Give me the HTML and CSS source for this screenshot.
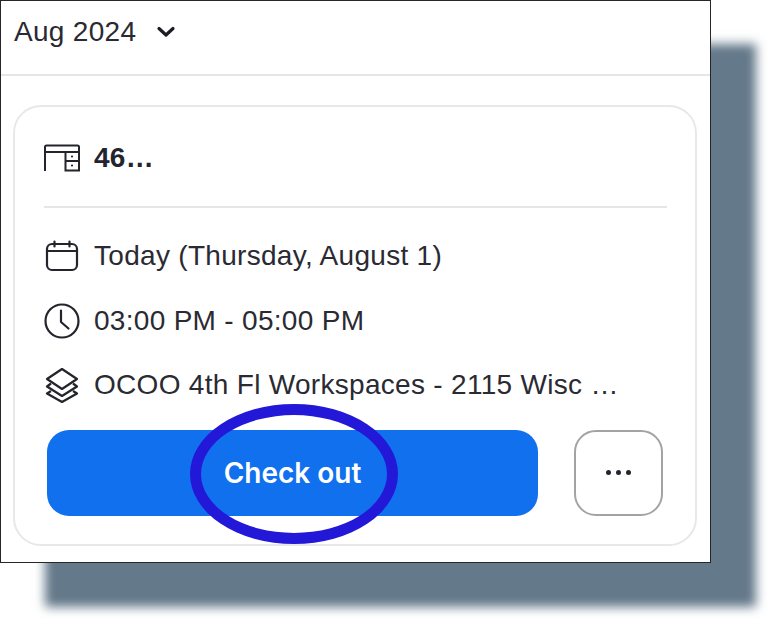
FILE: index.html
```html
<!DOCTYPE html>
<html lang="en">
  <head>
    <meta charset="UTF-8" />
    <meta name="viewport" content="width=device-width, initial-scale=1.0" />
    <title>Bookings</title>
    <link rel="stylesheet" href="styles.css">
  </head>
  <body>
    <div class="panel">
      <div class="month-bar">
        <span>Aug 2024</span>
        <svg class="chevron" width="20" height="14" viewBox="0 0 20 14" fill="none" stroke="#1c1c22" stroke-width="3.2" stroke-linecap="round" stroke-linejoin="round">
          <path d="M3 3.5 L10 10 L17 3.5" />
        </svg>
      </div>

      <div class="card">
        <div class="desk-row">
          <svg class="icon" width="36" height="28" viewBox="0 0 36 28" fill="none" stroke="#24242c" stroke-width="2">
            <path d="M1 27 V3 Q1 1.500 2.500 1.500 H33.500 Q35 1.500 35 3 V26.500 H21.500 V8 M1 8 H35 M21.500 17 H35" />
            <circle cx="28" cy="12.500" r="1.100" fill="#24242c" stroke="none" />
            <circle cx="28" cy="21.500" r="1.100" fill="#24242c" stroke="none" />
          </svg>
          <strong>46…</strong>
        </div>

        <div class="info-list">
          <div class="info-row">
            <svg class="icon" width="36" height="32" viewBox="0 0 36 32" fill="none" stroke="#24242c" stroke-width="2.200" stroke-linecap="round">
              <rect x="3" y="4" width="30" height="26" rx="5" />
              <path d="M3 11 H33 M10.500 1.500 V6.500 M25.500 1.500 V6.500" />
            </svg>
            <span>Today (Thursday, August 1)</span>
          </div>
          <div class="info-row">
            <svg class="icon" width="36" height="36" viewBox="0 0 36 36" fill="none" stroke="#24242c" stroke-width="2.200" stroke-linecap="round" stroke-linejoin="round">
              <circle cx="18" cy="18" r="16.500" />
              <path d="M17 7.500 V19 L24.500 25.500" />
            </svg>
            <span>03:00 PM - 05:00 PM</span>
          </div>
          <div class="info-row">
            <svg class="icon" width="36" height="36" viewBox="0 0 36 36" fill="none" stroke="#24242c" stroke-width="2.200" stroke-linejoin="round">
              <path d="M18 2 L33 12 L18 22 L3 12 Z" />
              <path d="M7 16.500 L3 19.500 L18 29 L33 19.500 L29 16.500" />
              <path d="M7 24 L3 26.500 L18 35 L33 26.500 L29 24" />
            </svg>
            <span>OCOO 4th Fl Workspaces - 2115 Wisc …</span>
          </div>
        </div>

        <div class="actions">
          <button class="btn-checkout">Check out</button>
          <button class="btn-more">
            <i></i><i></i><i></i>
          </button>
        </div>
      </div>

      <!-- hand drawn circle over the button -->
      <div class="mark"></div>
    </div>
  </body>
</html>
```

FILE: styles.css
```css
* {
  box-sizing: border-box;
}

html,
body {
  min-height: 620px;
}

body {
  margin: 0;
  padding-bottom: 57px;
  background-color: white;
  font-family: "Liberation Sans", Arial, sans-serif;
  color: #2a2a33;
  letter-spacing: 0.3px;
}

.panel {
  position: relative;
  width: 711px;
  height: 563px;
  background-color: white;
  border: 1px solid #26262a;
  box-shadow: 45px 44px 10px #64798a;
}

.month-bar {
  display: flex;
  align-items: center;
  gap: 20px;
  height: 75px;
  padding: 0 0 12px 13px;
  border-bottom: 2px solid #e6e6e6;
  font-size: 28px;
}

.card {
  margin: 29px 13px 0 12px;
  height: 441px;
  padding: 34px 28px 0 29px;
  border: 2px solid #e8e8e8;
  border-radius: 28px;
}

.desk-row {
  display: flex;
  align-items: center;
  gap: 14px;
  height: 33px;
  font-size: 28px;
}

.desk-row strong {
  color: #24242f;
}

.info-list {
  margin-top: 32px;
  padding-top: 16px;
  border-top: 2px solid #e6e6e6;
}

.info-row {
  display: flex;
  align-items: center;
  gap: 14px;
  height: 64.5px;
  font-size: 28px;
  white-space: nowrap;
}

.actions {
  display: flex;
  gap: 36px;
  margin-top: 12px;
  padding-left: 3px;
}

.actions button {
  height: 86px;
  border-radius: 22px;
}

.btn-checkout {
  width: 491px;
  padding-top: 2px;
  border: none;
  background-color: #1070ee;
  color: white;
  font-family: Inter, "Liberation Sans", sans-serif;
  font-size: 28px;
  font-weight: 600;
  letter-spacing: 0;
}

.btn-more {
  display: flex;
  align-items: center;
  justify-content: center;
  gap: 5px;
  width: 89px;
  border: 2px solid #a3a3a3;
  background-color: white;
}

.btn-more i {
  width: 5px;
  height: 5px;
  border-radius: 50%;
  background-color: #24242c;
}

.mark {
  position: absolute;
  left: 189px;
  top: 403px;
  width: 208px;
  height: 140px;
  border: 11px solid #2318d8;
  border-radius: 50%;
}
```
